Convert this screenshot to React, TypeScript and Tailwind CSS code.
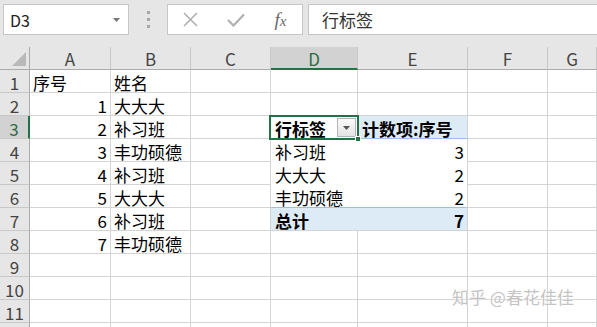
import React from "react";

const FONT = "font-['Noto_Sans_CJK_SC','Noto_Sans',sans-serif]";

type Cell = { t?: string; align?: "l" | "r"; bold?: boolean };

const rows: Cell[][] = [
  [{ t: "序号" }, { t: "姓名" }, {}, {}, {}, {}, {}],
  [{ t: "1", align: "r" }, { t: "大大大" }, {}, {}, {}, {}, {}],
  [{ t: "2", align: "r" }, { t: "补习班" }, {}, {}, {}, {}, {}],
  [{ t: "3", align: "r" }, { t: "丰功硕德" }, {}, {}, {}, {}, {}],
  [{ t: "4", align: "r" }, { t: "补习班" }, {}, {}, {}, {}, {}],
  [{ t: "5", align: "r" }, { t: "大大大" }, {}, {}, {}, {}, {}],
  [{ t: "6", align: "r" }, { t: "补习班" }, {}, {}, {}, {}, {}],
  [{ t: "7", align: "r" }, { t: "丰功硕德" }, {}, {}, {}, {}, {}],
  [{}, {}, {}, {}, {}, {}, {}],
  [{}, {}, {}, {}, {}, {}, {}],
  [{}, {}, {}, {}, {}, {}, {}],
  [{}, {}, {}, {}, {}, {}, {}],
];

// pivot content for D/E columns, rows index 2..6 (rows 3..7)
const pivot: Record<number, { d: string; e: string; kind: "head" | "body" | "total" }> = {
  2: { d: "行标签", e: "计数项:序号", kind: "head" },
  3: { d: "补习班", e: "3", kind: "body" },
  4: { d: "大大大", e: "2", kind: "body" },
  5: { d: "丰功硕德", e: "2", kind: "body" },
  6: { d: "总计", e: "7", kind: "total" },
};

function Text({ children, className = "" }: { children: React.ReactNode; className?: string }) {
  return <span className={`block pt-[3px] leading-[19px] whitespace-nowrap ${className}`}>{children}</span>;
}

function PivotD({ r }: { r: number }) {
  const p = pivot[r];
  if (p.kind === "head") {
    return (
      <div className="h-[23px] border-b border-b-[#9bc2e6] bg-white flex items-start justify-between pl-[4px] pr-[2px]">
        <Text className="font-bold">{p.d}</Text>
        <div className="w-[19px] h-[19px] border border-[#b4b4b4] bg-gradient-to-b from-[#fafafa] to-[#e4e4e4] flex items-center justify-center mt-[2px]">
          <svg width="7" height="4" viewBox="0 0 7 4">
            <polygon points="0,0 7,0 3.5,4" fill="#555" />
          </svg>
        </div>
      </div>
    );
  }
  if (p.kind === "total") {
    return (
      <div className="h-[23px] border-b border-[#d4d4d4] bg-[#ddebf7] pl-[4px]">
        <Text className="font-bold">{p.d}</Text>
      </div>
    );
  }
  return (
    <div className={`h-[23px] bg-white pl-[4px] ${r === 5 ? "border-b border-b-[#9bc2e6]" : ""}`}>
      <Text>{p.d}</Text>
    </div>
  );
}

function PivotE({ r }: { r: number }) {
  const p = pivot[r];
  if (p.kind === "head") {
    return (
      <div className="h-[23px] border-r border-r-[#d4d4d4] border-b border-b-[#9bc2e6] bg-[#ddebf7] pl-[4px]">
        <Text className="font-bold">{p.e}</Text>
      </div>
    );
  }
  if (p.kind === "total") {
    return (
      <div className="h-[23px] border-r border-b border-[#d4d4d4] bg-[#ddebf7] pr-[3px] text-right">
        <Text className="font-bold">{p.e}</Text>
      </div>
    );
  }
  return (
    <div className={`h-[23px] border-r border-r-[#d4d4d4] bg-white pr-[3px] text-right ${r === 5 ? "border-b border-b-[#9bc2e6]" : ""}`}>
      <Text>{p.e}</Text>
    </div>
  );
}

export default function App() {
  const colLetters = ["A", "B", "C", "D", "E", "F", "G"];
  return (
    <div className={`w-[597px] h-[327px] overflow-hidden bg-[#e6e6e6] text-[17px] text-black ${FONT} relative`}>
      {/* formula bar */}
      <div className="h-[47px] flex items-start pt-[4px] pl-[3px]">
        <div className="w-[126px] h-[31px] bg-white border border-[#c6c6c6] flex items-center justify-between pl-[6px] pr-[8px]">
          <span className="text-[16px] text-[#222] leading-none">D3</span>
          <svg width="7" height="4" viewBox="0 0 7 4">
            <polygon points="0,0 7,0 3.5,4" fill="#777" />
          </svg>
        </div>
        <div className="w-[38px] h-[31px] flex flex-col items-center justify-center gap-[4px]">
          <div className="w-[3px] h-[3px] bg-[#a8a8a8]" />
          <div className="w-[3px] h-[3px] bg-[#a8a8a8]" />
          <div className="w-[3px] h-[3px] bg-[#a8a8a8]" />
        </div>
        <div className="w-[136px] h-[31px] bg-white border border-[#c6c6c6] flex items-center">
          <div className="w-[45px] flex justify-center">
            <svg width="15" height="15" viewBox="0 0 15 15">
              <path d="M1 1 L14 14 M14 1 L1 14" stroke="#b0b0b0" strokeWidth="1.6" fill="none" />
            </svg>
          </div>
          <div className="w-[46px] flex justify-center">
            <svg width="18" height="14" viewBox="0 0 18 14">
              <path d="M1 7 L6.5 12.5 L17 1.5" stroke="#b0b0b0" strokeWidth="2.2" fill="none" />
            </svg>
          </div>
          <div className="w-[43px] flex justify-center">
            <span className="font-['Liberation_Serif',serif] italic text-[19px] leading-none text-[#6a6a6a]">
              f<span className="text-[15px]">x</span>
            </span>
          </div>
        </div>
        <div className="ml-[5px] flex-1 -mr-[2px] h-[31px] bg-white border border-[#c6c6c6] flex items-center pl-[13px]">
          <span className="text-[17px] text-[#333] leading-none">行标签</span>
        </div>
      </div>

      {/* grid */}
      <div className="relative">
        <div className="grid grid-cols-[30px_81px_80px_80px_87px_110px_80px_49px] bg-white">
          {/* header row */}
          <div className="h-[23px] bg-[#e6e6e6] border-r border-b border-[#ababab] relative">
            <svg className="absolute right-[3px] bottom-[3px]" width="14" height="14" viewBox="0 0 14 14">
              <polygon points="14,0 14,14 0,14" fill="#b9b9b9" />
            </svg>
          </div>
          {colLetters.map((c) => (
            <div
              key={c}
              className={`h-[23px] border-r border-r-[#c8c8c8] text-center ${
                c === "D" ? "bg-[#d2d2d2] border-b-2 border-b-[#217346] text-[#2d6b45]" : "bg-[#e6e6e6] border-b border-b-[#ababab] text-[#444]"
              }`}
            >
              <span className="block pt-[2px] leading-[19px]">{c}</span>
            </div>
          ))}
          {/* data rows */}
          {rows.map((row, r) => (
            <React.Fragment key={r}>
              <div
                className={`h-[23px] border-b border-b-[#c8c8c8] text-center ${
                  r === 2 ? "bg-[#d2d2d2] border-r-2 border-r-[#217346] text-[#2d6b45]" : "bg-[#e6e6e6] border-r border-r-[#ababab] text-[#444]"
                }`}
              >
                {r < 11 ? <Text>{r + 1}</Text> : null}
              </div>
              {row.map((cell, c) => {
                if (pivot[r] && c === 3) return <PivotD key={c} r={r} />;
                if (pivot[r] && c === 4) return <PivotE key={c} r={r} />;
                return (
                  <div
                    key={c}
                    className={`h-[23px] border-r border-b border-[#d4d4d4] ${
                      cell.align === "r" ? "text-right pr-[3px]" : "pl-[3px]"
                    }`}
                  >
                    {cell.t ? <Text className={cell.bold ? "font-bold" : ""}>{cell.t}</Text> : null}
                  </div>
                );
              })}
            </React.Fragment>
          ))}
        </div>

        {/* selection border on D3 */}
        <div className="absolute left-[269px] top-[68px] w-[90px] h-[25px] border-2 border-[#217346] pointer-events-none" />
        <div className="absolute left-[355px] top-[89px] w-[6px] h-[6px] bg-[#217346] border border-white pointer-events-none" />

        {/* watermark */}
        <div className="absolute left-[452px] top-[241px] text-[17px] leading-none text-[#c4c4c4] [text-shadow:0_0_2px_#ffffff,0_0_1px_#ffffff] whitespace-nowrap pointer-events-none">
          知乎 @春花佳佳
        </div>
      </div>
    </div>
  );
}
